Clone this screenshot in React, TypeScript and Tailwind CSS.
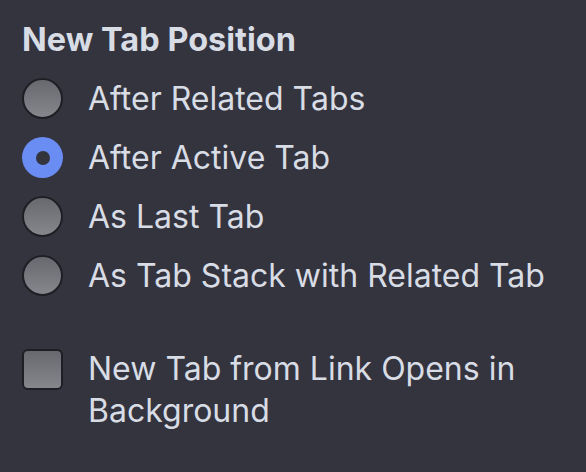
const options = [
  "After Related Tabs",
  "After Active Tab",
  "As Last Tab",
  "As Tab Stack with Related Tab",
];

const Radio = ({ checked }: { checked: boolean }) =>
  checked ? (
    <span className="flex h-[41px] w-[41px] shrink-0 items-center justify-center rounded-full bg-[#6a8df4]">
      <span className="h-[14px] w-[14px] rounded-full bg-[#33343e]" />
    </span>
  ) : (
    <span className="h-[41px] w-[41px] shrink-0 rounded-full border-2 border-[#1e1f25] bg-gradient-to-b from-[#68696f] to-[#86878d]" />
  );

export default function App() {
  const selected = 1;

  return (
    <div
      className="min-h-[472px] w-full bg-[#34343e] pl-[22px] pt-[20px] text-[#d8dce5]"
      style={{ fontFamily: "Inter, 'Noto Sans', sans-serif" }}
    >
      <h2 className="text-[32.5px] font-bold leading-[40px]">New Tab Position</h2>
      <div className="mt-[18px] flex flex-col gap-[18px]">
        {options.map((label, i) => (
          <label key={label} className="flex items-center gap-[25px]">
            <Radio checked={i === selected} />
            <span className="text-[32px] leading-[41px]">{label}</span>
          </label>
        ))}
      </div>
      <label className="mt-[52px] flex items-start gap-[25px]">
        <span className="mt-[1px] h-[41px] w-[41px] shrink-0 rounded-[6px] border-2 border-[#1e1f25] bg-gradient-to-b from-[#68696f] to-[#86878d]" />
        <span className="w-[470px] text-[32px] leading-[42px]">
          New Tab from Link Opens in Background
        </span>
      </label>
    </div>
  );
}
